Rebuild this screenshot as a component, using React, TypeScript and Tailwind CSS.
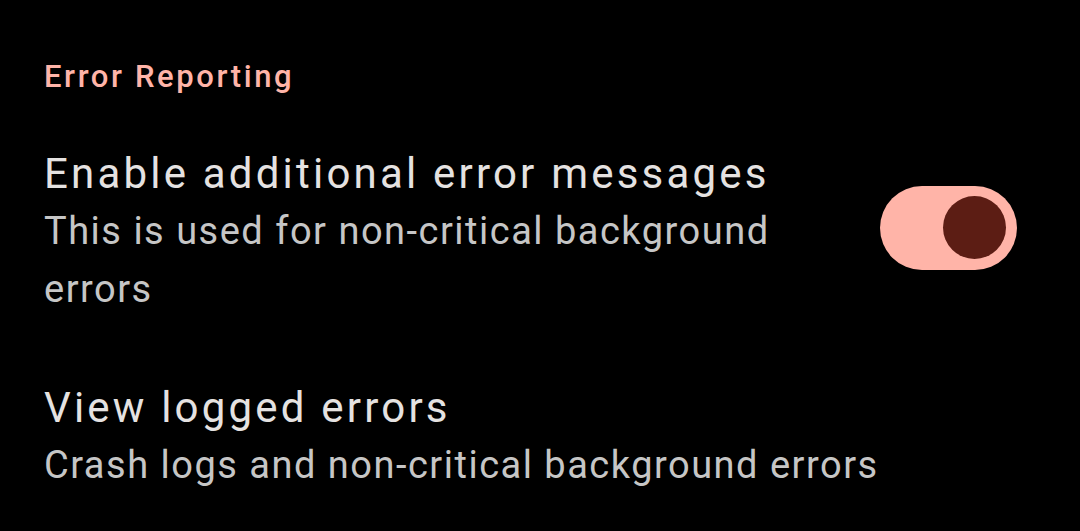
import React from "react";

export default function App() {
  return (
    <div
      className="w-[1080px] h-[531px] bg-black overflow-hidden"
      style={{ fontFamily: "Roboto, 'Noto Sans', sans-serif" }}
    >
      <div className="pt-[57px] pl-[44px]">
        <div className="text-[31px] leading-[40px] font-medium tracking-[2.6px] text-[#ffb4a8]">
          Error Reporting
        </div>
      </div>
      <div className="mt-[48px] flex items-center pl-[44px] pr-[63px]">
        <div className="flex-1 min-w-0">
          <div className="text-[42px] leading-[57px] tracking-[3.2px] text-[#e5e2e1]">
            Enable additional error messages
          </div>
          <div className="text-[38px] leading-[58px] tracking-[1.5px] text-[#c6c6c6]">
            This is used for non-critical background errors
          </div>
        </div>
        <div className="ml-[42px] -mt-[8px] w-[137px] h-[84px] rounded-full bg-[#ffb4a8] flex items-center justify-end pr-[11px] shrink-0">
          <div className="w-[63px] h-[63px] rounded-full bg-[#5c1d14]" />
        </div>
      </div>
      <div className="mt-[61px] pl-[44px]">
        <div className="text-[42px] leading-[57px] tracking-[3.2px] text-[#e5e2e1]">
          View logged errors
        </div>
        <div className="text-[38px] leading-[58px] tracking-[1.5px] text-[#c6c6c6]">
          Crash logs and non-critical background errors
        </div>
      </div>
    </div>
  );
}
